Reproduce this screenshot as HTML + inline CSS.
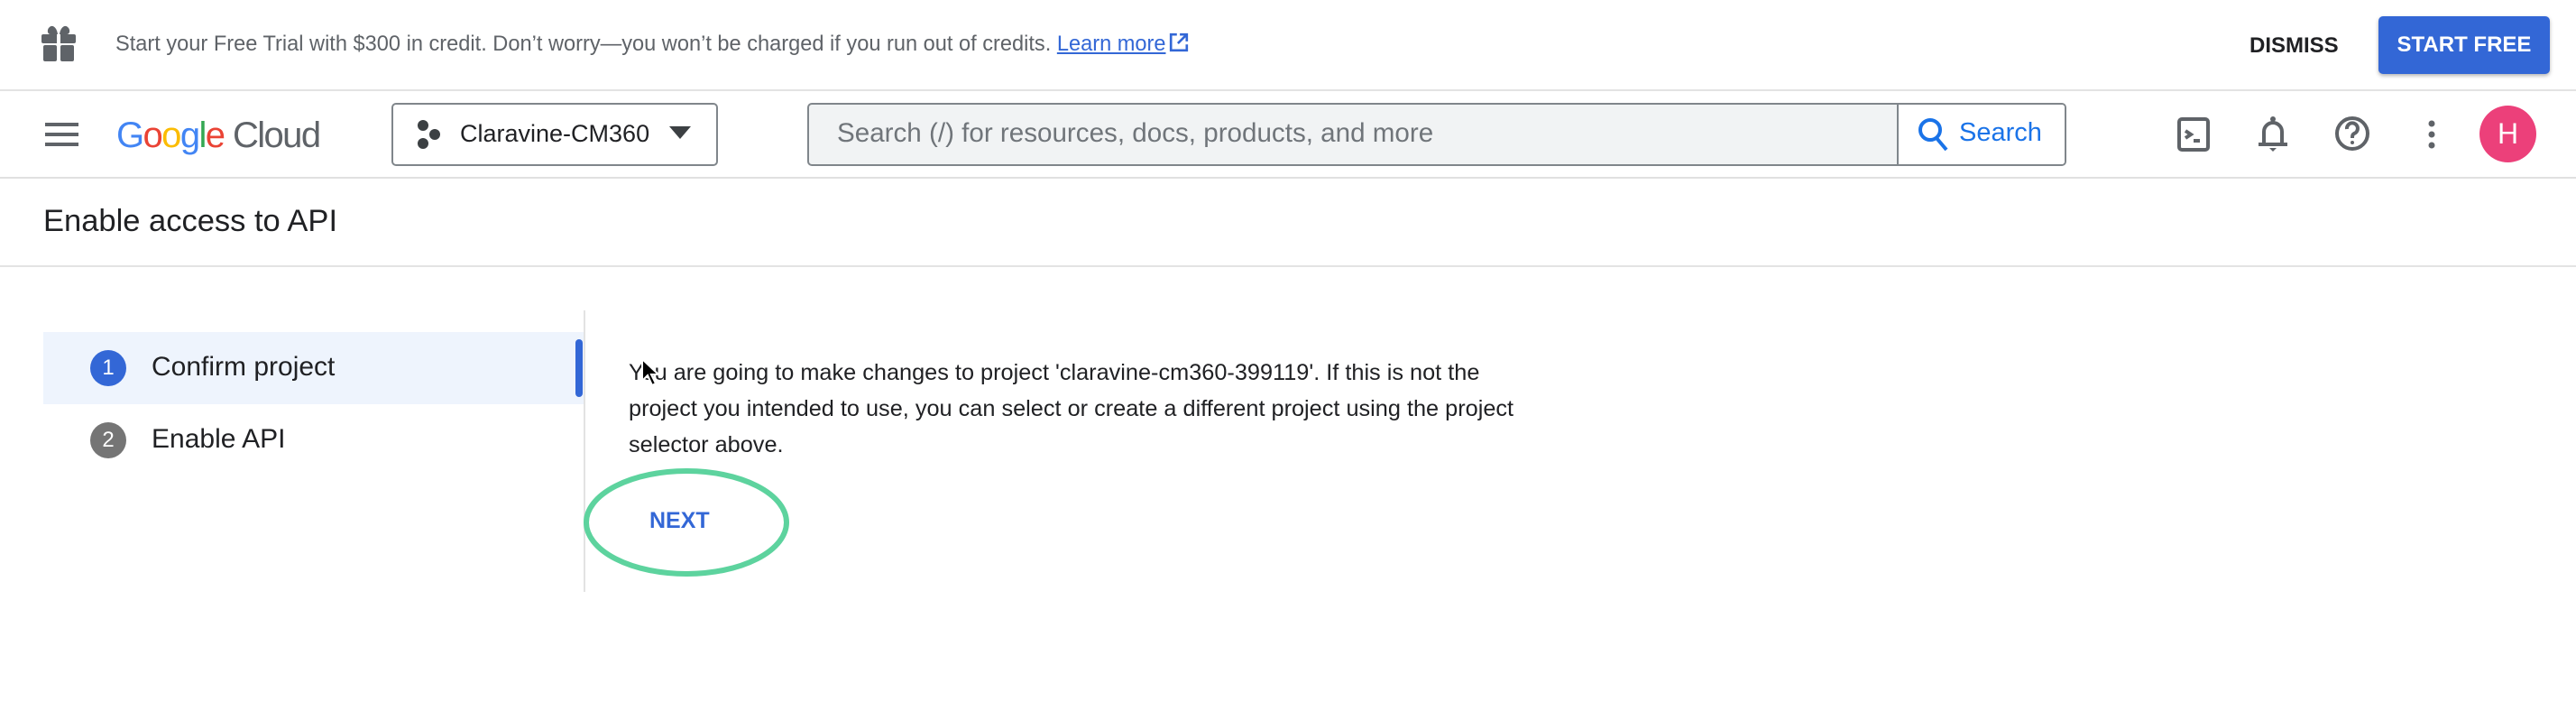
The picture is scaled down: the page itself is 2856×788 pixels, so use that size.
<!DOCTYPE html>
<html><head><meta charset="utf-8"><style>
*{margin:0;padding:0;box-sizing:border-box}
body{width:2856px;height:788px;background:#fff;font-family:"Liberation Sans",sans-serif;position:relative;overflow:hidden;color:#202124}
.a{position:absolute}
</style></head><body>
<!-- banner -->
<svg class="a" style="left:46px;top:28px" width="38" height="40" viewBox="0 0 38 40"><g fill="#5f6368"><rect x="0" y="10" width="38" height="10" rx="2"/><rect x="2" y="22" width="15" height="18" rx="2"/><rect x="21" y="22" width="15" height="18" rx="2"/><path d="M9 2c3-3 8 0 9 8H10C6 10 6 4 9 2zM29 2c-3-3-8 0-9 8h8c4 0 4-6 1-8z"/></g><rect x="17" y="10" width="4" height="30" fill="#fff"/></svg>
<div class="a" style="left:128px;top:36px;font-size:23.6px;color:#5f6368;white-space:nowrap">Start your Free Trial with $300 in credit. Don’t worry—you won’t be charged if you run out of credits. <span style="color:#3367d6;text-decoration:underline">Learn more</span><svg style="vertical-align:-2px;margin-left:3px" width="22" height="22" viewBox="0 0 20 20" fill="none" stroke="#3367d6" stroke-width="2.4"><path d="M8 2H2v16h16v-6M11 2h7v7M18 2L9 11"/></svg></div>
<div class="a" style="left:2494px;top:37px;font-size:24px;font-weight:bold;color:#202124">DISMISS</div>
<div class="a" style="left:2637px;top:18px;width:190px;height:64px;background:#3367d6;border-radius:5px;box-shadow:0 2px 4px rgba(0,0,0,.3);color:#fff;font-size:24px;font-weight:bold;line-height:64px;text-align:center">START FREE</div>
<div class="a" style="left:0;top:99px;width:2856px;height:2px;background:#e3e3e3"></div>
<!-- nav -->
<div class="a" style="left:50px;top:136px;width:37px;height:4px;background:#5f6368;box-shadow:0 11px 0 #5f6368,0 22px 0 #5f6368"></div>
<div class="a" style="left:129px;top:128px;font-size:40px;white-space:nowrap;letter-spacing:-1.6px"><span style="color:#4285f4">G</span><span style="color:#ea4335">o</span><span style="color:#fbbc04">o</span><span style="color:#4285f4">g</span><span style="color:#34a853">l</span><span style="color:#ea4335">e</span> <span style="color:#5f6368">Cloud</span></div>
<div class="a" style="left:434px;top:114px;width:362px;height:70px;border:2px solid #80868b;border-radius:5px"></div>
<svg class="a" style="left:462px;top:133px" width="28" height="32" viewBox="0 0 28 32" fill="#3c4043"><circle cx="7" cy="6" r="6"/><circle cx="20" cy="16" r="6"/><circle cx="7" cy="26" r="6"/></svg>
<div class="a" style="left:510px;top:133px;font-size:27px;color:#202124">Claravine-CM360</div>
<svg class="a" style="left:742px;top:140px" width="24" height="16"><path d="M0 0h24L12 14z" fill="#3c4043"/></svg>
<div class="a" style="left:895px;top:114px;width:1396px;height:70px;border:2px solid #80868b;border-radius:5px;background:#f1f3f4;overflow:hidden"><div class="a" style="left:1206px;top:0;width:188px;height:66px;background:#fff;border-left:2px solid #80868b"></div></div>
<div class="a" style="left:928px;top:131px;font-size:29.6px;color:#70757a">Search (/) for resources, docs, products, and more</div>
<svg class="a" style="left:2126px;top:130px" width="36" height="38" viewBox="0 0 36 38" fill="none" stroke="#1a73e8" stroke-width="4"><circle cx="14" cy="14" r="11"/><path d="M21 23l11 13"/></svg>
<div class="a" style="left:2172px;top:131px;font-size:29px;color:#1a73e8">Search</div>
<svg class="a" style="left:2412px;top:129px" width="40" height="40" viewBox="0 0 40 40" fill="none" stroke="#5f6368" stroke-width="4"><rect x="4" y="3" width="32" height="34" rx="3"/><path d="M11 16l6 4-6 4M20 27h7"/></svg>
<svg class="a" style="left:2502px;top:128px" width="36" height="42" viewBox="0 0 36 42" fill="none" stroke="#5f6368" stroke-width="4"><path d="M8 32V18a10 10 0 0 1 20 0v14M2 32h32"/><circle cx="18" cy="4" r="3" fill="#5f6368" stroke="none"/><path d="M14 36h8l-4 4z" fill="#5f6368" stroke="none"/></svg>
<svg class="a" style="left:2588px;top:128px" width="40" height="40" viewBox="0 0 40 40" fill="none" stroke="#5f6368" stroke-width="4"><circle cx="20" cy="20" r="17"/><path d="M14 15a6 6 0 1 1 8 5c-2 1-2 3-2 5"/><circle cx="20" cy="30" r="2" fill="#5f6368" stroke="none"/></svg>
<svg class="a" style="left:2689px;top:133px" width="14" height="32"><g fill="#5f6368"><circle cx="7" cy="4" r="3.5"/><circle cx="7" cy="16" r="3.5"/><circle cx="7" cy="28" r="3.5"/></g></svg>
<div class="a" style="left:2749px;top:117px;width:63px;height:63px;border-radius:50%;background:#ec407a;color:#fff;font-size:32px;line-height:63px;text-align:center">H</div>
<div class="a" style="left:0;top:196px;width:2856px;height:2px;background:#e0e0e0"></div>
<!-- title -->
<div class="a" style="left:48px;top:226px;font-size:34.5px;color:#202124">Enable access to API</div>
<div class="a" style="left:0;top:294px;width:2856px;height:2px;background:#e3e3e3"></div>
<!-- steps -->
<div class="a" style="left:48px;top:368px;width:599px;height:80px;background:#eef4fd"></div>
<div class="a" style="left:638px;top:376px;width:8px;height:64px;background:#3367d6;border-radius:4px"></div>
<div class="a" style="left:100px;top:388px;width:40px;height:40px;border-radius:50%;background:#3367d6;color:#fff;font-size:24px;line-height:40px;text-align:center">1</div>
<div class="a" style="left:168px;top:390px;font-size:30px;color:#202124">Confirm project</div>
<div class="a" style="left:100px;top:468px;width:40px;height:40px;border-radius:50%;background:#757575;color:#fff;font-size:24px;line-height:40px;text-align:center">2</div>
<div class="a" style="left:168px;top:470px;font-size:30px;color:#202124">Enable API</div>
<div class="a" style="left:647px;top:344px;width:2px;height:312px;background:#e3e3e3"></div>
<!-- content -->
<div class="a" style="left:697px;top:393px;width:1100px;font-size:25.3px;line-height:40px;color:#202124;white-space:nowrap">You are going to make changes to project 'claravine-cm360-399119'. If this is not the<br>project you intended to use, you can select or create a different project using the project<br>selector above.</div>
<svg class="a" style="left:710px;top:396px" width="22" height="34" viewBox="0 0 22 34"><path d="M2 2v24l6-6 5 11 4-2-5-10h8z" fill="#000" stroke="#fff" stroke-width="2"/></svg>
<div class="a" style="left:720px;top:563px;font-size:25px;font-weight:bold;color:#3367d6">NEXT</div>
<svg class="a" style="left:645px;top:515px" width="235" height="130"><ellipse cx="116" cy="64" rx="111" ry="57" fill="none" stroke="#5dd39e" stroke-width="6"/></svg>
</body></html>
